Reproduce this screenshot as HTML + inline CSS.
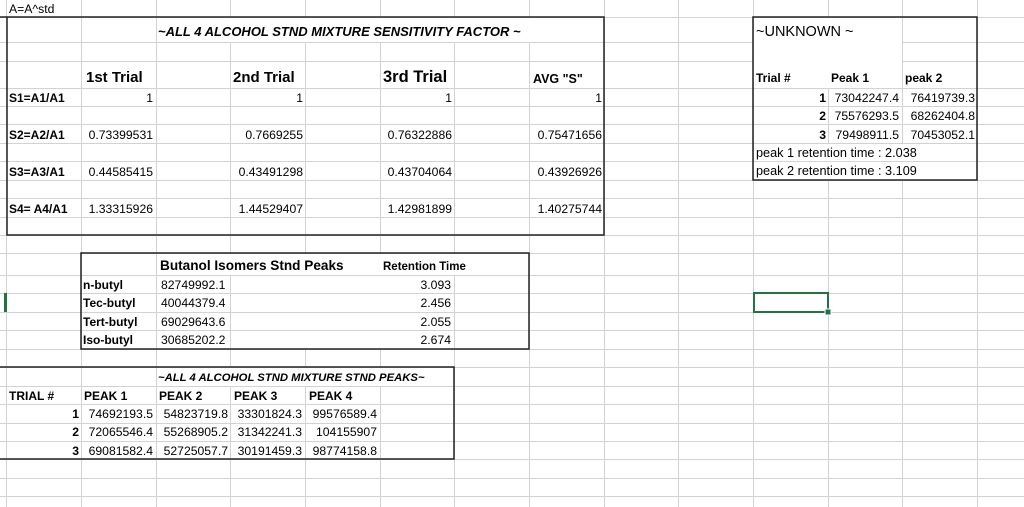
<!DOCTYPE html>
<html><head><meta charset="utf-8"><style>
html,body{margin:0;padding:0;background:#fff;width:1024px;height:507px;overflow:hidden}
svg{display:block}
text{font-family:"Liberation Sans",Arial,sans-serif;fill:#000}
.n{font-size:12.2px}
.b{font-size:12px;font-weight:bold}
</style></head><body>
<svg width="1024" height="507" viewBox="0 0 1024 507" xmlns="http://www.w3.org/2000/svg">
<g stroke="#d2d2d2" stroke-width="1" shape-rendering="crispEdges">
<line x1="0" y1="17.5" x2="1024" y2="17.5"/><line x1="0" y1="42.5" x2="1024" y2="42.5"/><line x1="0" y1="61.5" x2="1024" y2="61.5"/><line x1="0" y1="88.5" x2="1024" y2="88.5"/><line x1="0" y1="106.5" x2="1024" y2="106.5"/><line x1="0" y1="124.5" x2="1024" y2="124.5"/><line x1="0" y1="143.5" x2="1024" y2="143.5"/><line x1="0" y1="161.5" x2="1024" y2="161.5"/><line x1="0" y1="180.5" x2="1024" y2="180.5"/><line x1="0" y1="198.5" x2="1024" y2="198.5"/><line x1="0" y1="217.5" x2="1024" y2="217.5"/><line x1="0" y1="235.5" x2="1024" y2="235.5"/><line x1="0" y1="253.5" x2="1024" y2="253.5"/><line x1="0" y1="275.5" x2="1024" y2="275.5"/><line x1="0" y1="293.5" x2="1024" y2="293.5"/><line x1="0" y1="312.5" x2="1024" y2="312.5"/><line x1="0" y1="330.5" x2="1024" y2="330.5"/><line x1="0" y1="349.5" x2="1024" y2="349.5"/><line x1="0" y1="367.5" x2="1024" y2="367.5"/><line x1="0" y1="386.5" x2="1024" y2="386.5"/><line x1="0" y1="404.5" x2="1024" y2="404.5"/><line x1="0" y1="423.5" x2="1024" y2="423.5"/><line x1="0" y1="441.5" x2="1024" y2="441.5"/><line x1="0" y1="459.5" x2="1024" y2="459.5"/><line x1="0" y1="478.5" x2="1024" y2="478.5"/><line x1="0" y1="496.5" x2="1024" y2="496.5"/>
<line x1="6.5" y1="0" x2="6.5" y2="507"/><line x1="81.5" y1="0" x2="81.5" y2="507"/><line x1="156.5" y1="0" x2="156.5" y2="507"/><line x1="230.5" y1="0" x2="230.5" y2="507"/><line x1="305.5" y1="0" x2="305.5" y2="507"/><line x1="380.5" y1="0" x2="380.5" y2="507"/><line x1="454.5" y1="0" x2="454.5" y2="507"/><line x1="529.5" y1="0" x2="529.5" y2="507"/><line x1="604.5" y1="0" x2="604.5" y2="507"/><line x1="678.5" y1="0" x2="678.5" y2="507"/><line x1="753.5" y1="0" x2="753.5" y2="507"/><line x1="828.5" y1="0" x2="828.5" y2="507"/><line x1="902.5" y1="0" x2="902.5" y2="507"/><line x1="977.5" y1="0" x2="977.5" y2="507"/>
</g>
<g fill="#fff">
<rect x="157" y="18" width="446" height="24"/>
<rect x="754" y="18" width="148" height="70"/>
<rect x="754" y="144" width="222" height="17"/><rect x="754" y="162" width="222" height="18"/>
<rect x="157" y="254" width="371" height="21"/>
<rect x="232" y="276" width="221" height="17"/><rect x="232" y="294" width="221" height="18"/><rect x="232" y="313" width="221" height="17"/><rect x="232" y="331" width="221" height="18"/>
<rect x="157" y="368" width="296" height="18"/>
</g>
<g stroke="#222" stroke-width="1.5" fill="none">
<path d="M0 17 H604 V235 H7 V17"/>
<rect x="753" y="17" width="224" height="163"/>
<rect x="81" y="253" width="448" height="96"/>
<path d="M0 367 H454 V459 H0"/>
</g>
<rect x="754" y="293" width="74" height="19" fill="none" stroke="#217346" stroke-width="2"/>
<rect x="825" y="309" width="6" height="6" fill="#217346" stroke="#fff" stroke-width="1"/>
<rect x="4" y="293" width="3" height="19" fill="#217346"/>

<text x="9" y="13" class="n">A=A^std</text>
<text x="158" y="36" style="font-size:13px;font-weight:bold;font-style:italic">~ALL 4 ALCOHOL STND MIXTURE SENSITIVITY FACTOR ~</text>
<text x="86" y="82" style="font-size:15px;font-weight:bold">1st Trial</text>
<text x="233" y="82" style="font-size:15px;font-weight:bold">2nd Trial</text>
<text x="383" y="82" style="font-size:16.5px;font-weight:bold">3rd Trial</text>
<text x="533" y="83" style="font-size:12.5px;font-weight:bold">AVG "S"</text>
<text x="9" y="102" class="b">S1=A1/A1</text>
<text x="9" y="139" class="b">S2=A2/A1</text>
<text x="9" y="176" class="b">S3=A3/A1</text>
<text x="9" y="213" class="b">S4= A4/A1</text>
<g class="n" text-anchor="end">
<text x="153" y="102">1</text><text x="303" y="102">1</text><text x="452" y="102">1</text><text x="602" y="102">1</text>
<text x="153" y="139">0.73399531</text><text x="303" y="139">0.7669255</text><text x="452" y="139">0.76322886</text><text x="602" y="139">0.75471656</text>
<text x="153" y="176">0.44585415</text><text x="303" y="176">0.43491298</text><text x="452" y="176">0.43704064</text><text x="602" y="176">0.43926926</text>
<text x="153" y="213">1.33315926</text><text x="303" y="213">1.44529407</text><text x="452" y="213">1.42981899</text><text x="602" y="213">1.40275744</text>
</g>

<text x="756" y="36" style="font-size:14.5px">~UNKNOWN ~</text>
<text x="756" y="82" class="b">Trial #</text>
<text x="831" y="82" class="b">Peak 1</text>
<text x="905" y="82" class="b">peak 2</text>
<g class="n" text-anchor="end">
<text x="826" y="102" font-weight="bold">1</text><text x="826" y="120" font-weight="bold">2</text><text x="826" y="139" font-weight="bold">3</text>
<text x="899" y="102">73042247.4</text><text x="899" y="120">75576293.5</text><text x="899" y="139">79498911.5</text>
<text x="975" y="102">76419739.3</text><text x="975" y="120">68262404.8</text><text x="975" y="139">70453052.1</text>
</g>
<text x="756" y="157" style="font-size:12.7px">peak 1 retention time : 2.038</text>
<text x="756" y="175" style="font-size:12.7px">peak 2 retention time : 3.109</text>

<text x="160" y="270" style="font-size:13.6px;font-weight:bold">Butanol Isomers Stnd Peaks</text>
<text x="383" y="270" style="font-size:11.5px;font-weight:bold">Retention Time</text>
<text x="83" y="289" class="b">n-butyl</text>
<text x="83" y="307" class="b">Tec-butyl</text>
<text x="83" y="326" class="b">Tert-butyl</text>
<text x="83" y="344" class="b">Iso-butyl</text>
<g class="n">
<text x="161" y="289">82749992.1</text><text x="161" y="307">40044379.4</text><text x="161" y="326">69029643.6</text><text x="161" y="344">30685202.2</text>
</g>
<g class="n" text-anchor="end">
<text x="451" y="289">3.093</text><text x="451" y="307">2.456</text><text x="451" y="326">2.055</text><text x="451" y="344">2.674</text>
</g>

<text x="158" y="381" style="font-size:11.3px;font-weight:bold;font-style:italic">~ALL 4 ALCOHOL STND MIXTURE STND PEAKS~</text>
<text x="9" y="400" class="b">TRIAL #</text>
<text x="84" y="400" class="b">PEAK 1</text>
<text x="159" y="400" class="b">PEAK 2</text>
<text x="234" y="400" class="b">PEAK 3</text>
<text x="309" y="400" class="b">PEAK 4</text>
<g class="n" text-anchor="end">
<text x="79" y="418" font-weight="bold">1</text><text x="79" y="436" font-weight="bold">2</text><text x="79" y="455" font-weight="bold">3</text>
<text x="153" y="418">74692193.5</text><text x="228" y="418">54823719.8</text><text x="302" y="418">33301824.3</text><text x="377" y="418">99576589.4</text>
<text x="153" y="436">72065546.4</text><text x="228" y="436">55268905.2</text><text x="302" y="436">31342241.3</text><text x="377" y="436">104155907</text>
<text x="153" y="455">69081582.4</text><text x="228" y="455">52725057.7</text><text x="302" y="455">30191459.3</text><text x="377" y="455">98774158.8</text>
</g>
</svg>
</body></html>
